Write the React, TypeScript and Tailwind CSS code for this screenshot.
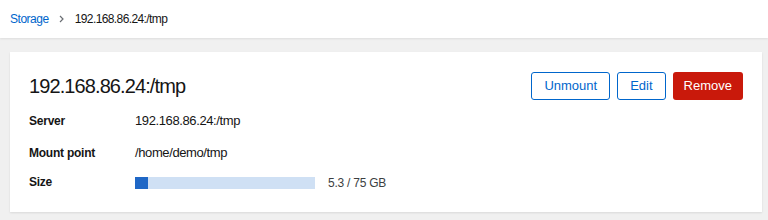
export default function App() {
  return (
    <div
      className="min-h-[220px] bg-[#f0f0f0] text-[#151515]"
      style={{ fontFamily: '"Liberation Sans", Arial, sans-serif' }}
    >
      <nav className="flex h-[38px] items-center bg-white px-[10px] text-[12px] tracking-[-0.04em] shadow-[0_1px_2px_rgba(0,0,0,0.08)]">
        <a className="text-[#0066cc]">Storage</a>
        <svg className="ml-[10px] mr-[11px]" width="5" height="8" viewBox="0 0 5 8" fill="none">
          <path d="M1 1l3 3-3 3" stroke="#6a6e73" strokeWidth="1.2" />
        </svg>
        <span className="tracking-[-0.05em]">192.168.86.24:/tmp</span>
      </nav>
      <main className="pl-[10px] pr-[6px] pt-[14px]">
        <section className="bg-white pb-[20px] pl-[19px] pr-[19px] pt-[19px] shadow-[0_1px_2px_rgba(0,0,0,0.1)]">
          <div className="flex items-center justify-between">
            <h1 className="text-[20px] leading-[30px] tracking-[-0.045em]">192.168.86.24:/tmp</h1>
            <div className="flex gap-[7px] text-[13px]">
              <button className="h-[28px] rounded-[3px] border border-[#0066cc] px-[12px] text-[#0066cc]">
                Unmount
              </button>
              <button className="h-[28px] rounded-[3px] border border-[#0066cc] px-[12px] text-[#0066cc]">
                Edit
              </button>
              <button className="h-[28px] rounded-[3px] bg-[#c9190b] px-[11px] text-white">
                Remove
              </button>
            </div>
          </div>
          <dl className="mt-[11px] grid grid-cols-[106px_1fr] gap-y-[14px] text-[13px] tracking-[-0.03em]">
            <dt className="text-[12px] font-bold leading-[18px] tracking-[-0.02em]">Server</dt>
            <dd className="leading-[18px]">192.168.86.24:/tmp</dd>
            <dt className="text-[12px] font-bold leading-[18px] tracking-[-0.02em]">Mount point</dt>
            <dd className="leading-[18px]">/home/demo/tmp</dd>
            <dt className="-mt-[3px] text-[12px] font-bold leading-[18px] tracking-[-0.02em]">Size</dt>
            <dd className="-mt-[2px] flex items-center gap-[13px] leading-[18px]">
              <div className="h-[12px] w-[180px] bg-[#cfe0f4]">
                <div className="h-full w-[13px] bg-[#1f67c6]" />
              </div>
              <span className="text-[12px] tracking-[-0.02em] text-[#3c3f42]">5.3 / 75 GB</span>
            </dd>
          </dl>
        </section>
      </main>
    </div>
  );
}
